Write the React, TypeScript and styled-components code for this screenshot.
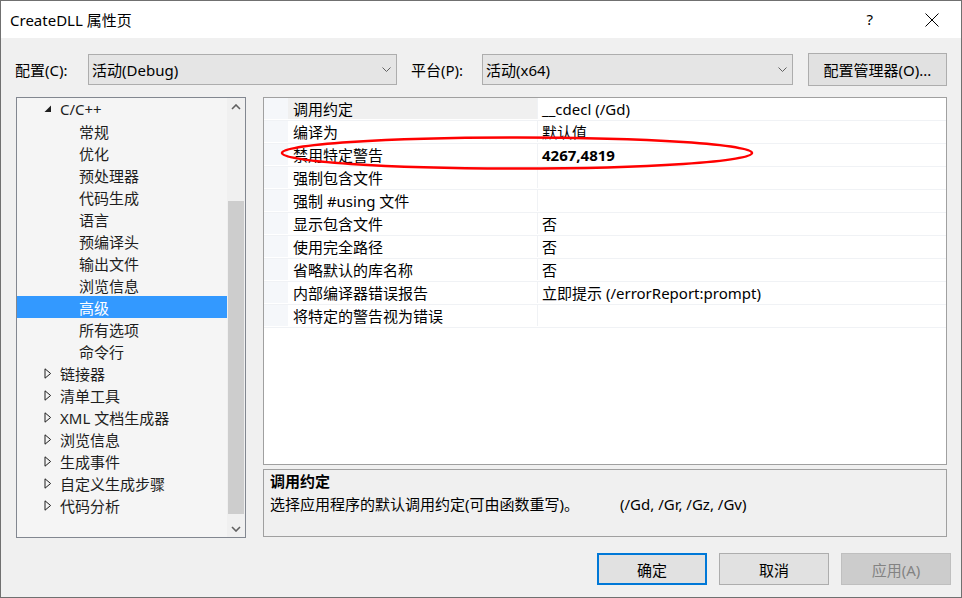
import { FC } from 'react';
import styled, { createGlobalStyle } from 'styled-components';

const GlobalStyle = createGlobalStyle`
  html, body {
    margin: 0;
    padding: 0;
    background: #f0f0f0;
  }
  body {
    font-family: 'Noto Sans', 'Noto Sans CJK SC', sans-serif;
    font-size: 15px;
    color: #000;
  }
  * {
    box-sizing: border-box;
  }
`;

type TreeNode = {
  label: string;
  depth: 1 | 2;
  state?: 'open' | 'closed';
  selected?: boolean;
};

const treeNodes: TreeNode[] = [
  { label: 'C/C++', depth: 1, state: 'open' },
  { label: '常规', depth: 2 },
  { label: '优化', depth: 2 },
  { label: '预处理器', depth: 2 },
  { label: '代码生成', depth: 2 },
  { label: '语言', depth: 2 },
  { label: '预编译头', depth: 2 },
  { label: '输出文件', depth: 2 },
  { label: '浏览信息', depth: 2 },
  { label: '高级', depth: 2, selected: true },
  { label: '所有选项', depth: 2 },
  { label: '命令行', depth: 2 },
  { label: '链接器', depth: 1, state: 'closed' },
  { label: '清单工具', depth: 1, state: 'closed' },
  { label: 'XML 文档生成器', depth: 1, state: 'closed' },
  { label: '浏览信息', depth: 1, state: 'closed' },
  { label: '生成事件', depth: 1, state: 'closed' },
  { label: '自定义生成步骤', depth: 1, state: 'closed' },
  { label: '代码分析', depth: 1, state: 'closed' },
];

type Prop = { name: string; value?: string; bold?: boolean; current?: boolean };

const props: Prop[] = [
  { name: '调用约定', value: '__cdecl (/Gd)', current: true },
  { name: '编译为', value: '默认值' },
  { name: '禁用特定警告', value: '4267,4819', bold: true },
  { name: '强制包含文件' },
  { name: '强制 #using 文件' },
  { name: '显示包含文件', value: '否' },
  { name: '使用完全路径', value: '否' },
  { name: '省略默认的库名称', value: '否' },
  { name: '内部编译器错误报告', value: '立即提示 (/errorReport:prompt)' },
  { name: '将特定的警告视为错误' },
];

const ComboArrow: FC = () => (
  <svg width="9" height="5" viewBox="0 0 9 5">
    <path d="M0.5 0.5 L4.5 4.5 L8.5 0.5" fill="none" stroke="#606060" strokeWidth="1" />
  </svg>
);

const TreeArrow: FC<{ state: 'open' | 'closed' }> = ({ state }) =>
  state === 'open' ? (
    <svg width="8" height="8" viewBox="0 0 8 8">
      <path d="M7 0.5 L7 7 L0.5 7 Z" fill="#1e1e1e" />
    </svg>
  ) : (
    <svg width="8" height="11" viewBox="0 0 8 11">
      <path d="M1 0.8 L6.6 5.5 L1 10.2 Z" fill="none" stroke="#1e1e1e" strokeWidth="1" />
    </svg>
  );

const ScrollChevron: FC<{ up?: boolean }> = ({ up }) => (
  <svg width="10" height="6" viewBox="0 0 10 6">
    <path
      d={up ? 'M1 5 L5 1 L9 5' : 'M1 1 L5 5 L9 1'}
      fill="none"
      stroke="#606060"
      strokeWidth="1.6"
    />
  </svg>
);

const App: FC = () => {
  return (
    <Window>
      <GlobalStyle />
      <TitleBar>
        <Title>CreateDLL 属性页</Title>
        <TitleButtons>
          <HelpMark>?</HelpMark>
          <svg width="14" height="14" viewBox="0 0 14 14">
            <path d="M0.5 0.5 L13.5 13.5 M13.5 0.5 L0.5 13.5" stroke="#000" strokeWidth="1" />
          </svg>
        </TitleButtons>
      </TitleBar>

      <ConfigRow>
        <FieldLabel>配置(C):</FieldLabel>
        <Combo>
          <span>活动(Debug)</span>
          <ComboArrow />
        </Combo>
        <FieldLabel $gap>平台(P):</FieldLabel>
        <Combo $width={311}>
          <span>活动(x64)</span>
          <ComboArrow />
        </Combo>
        <ManagerButton>配置管理器(O)...</ManagerButton>
      </ConfigRow>

      <Main>
        <Tree>
          <TreeList>
            {treeNodes.map((n, i) => (
              <TreeRow key={i} $depth={n.depth} $selected={n.selected}>
                {n.state && (
                  <Expander>
                    <TreeArrow state={n.state} />
                  </Expander>
                )}
                {n.label}
              </TreeRow>
            ))}
          </TreeList>
          <ScrollBar>
            <ScrollButton>
              <ScrollChevron up />
            </ScrollButton>
            <ScrollTrack>
              <ScrollThumb />
            </ScrollTrack>
            <ScrollButton>
              <ScrollChevron />
            </ScrollButton>
          </ScrollBar>
        </Tree>

        <RightColumn>
          <Grid>
            {props.map((p, i) => (
              <GridRow key={i}>
                <Gutter />
                <NameCell $current={p.current}>{p.name}</NameCell>
                <ValueCell $bold={p.bold}>{p.value}</ValueCell>
              </GridRow>
            ))}
            <Marker width="474" height="36" viewBox="0 0 474 36">
              <ellipse cx="237" cy="18" rx="235" ry="15.5" fill="none" stroke="#ff0000" strokeWidth="2.5" />
            </Marker>
          </Grid>
          <Description>
            <DescTitle>调用约定</DescTitle>
            <DescText>
              <DescLead>选择应用程序的默认调用约定(可由函数重写)。</DescLead>
              (/Gd, /Gr, /Gz, /Gv)
            </DescText>
          </Description>
        </RightColumn>
      </Main>

      <Footer>
        <DialogButton $primary>确定</DialogButton>
        <DialogButton>取消</DialogButton>
        <DialogButton disabled>应用(A)</DialogButton>
      </Footer>
    </Window>
  );
};

export default App;

const Window = styled.div`
  width: 962px;
  height: 598px;
  display: flex;
  flex-direction: column;
  background: #f0f0f0;
  border: 1px solid #707070;
  overflow: hidden;
`;

const TitleBar = styled.div`
  height: 37px;
  flex-shrink: 0;
  display: flex;
  align-items: center;
  justify-content: space-between;
  background: #fff;
  padding: 0 22px 0 9px;
`;

const Title = styled.div`
  font-size: 15px;
`;

const TitleButtons = styled.div`
  display: flex;
  align-items: center;
  gap: 52px;
`;

const HelpMark = styled.span`
  font-size: 15px;
  line-height: 1;
`;

const ConfigRow = styled.div`
  display: flex;
  align-items: center;
  height: 33px;
  margin-top: 15px;
  padding-left: 14px;
`;

const FieldLabel = styled.span<{ $gap?: boolean }>`
  margin-left: ${(p) => (p.$gap ? '14px' : '0')};
  width: ${(p) => (p.$gap ? 71 : 73)}px;
  white-space: nowrap;
`;

const Combo = styled.div<{ $width?: number }>`
  width: ${(p) => p.$width ?? 309}px;
  height: 31px;
  display: flex;
  align-items: center;
  justify-content: space-between;
  padding: 0 5px 0 3px;
  background: #e5e5e5;
  border: 1px solid #adadad;
`;

const ManagerButton = styled.div`
  margin-left: 15px;
  width: 139px;
  height: 33px;
  display: flex;
  align-items: center;
  justify-content: center;
  background: #e1e1e1;
  border: 1px solid #adadad;
`;

const Main = styled.div`
  display: flex;
  margin-top: 11px;
  padding-left: 15px;
  gap: 17px;
`;

const Tree = styled.div`
  width: 230px;
  height: 441px;
  display: flex;
  background: #f5f5f5;
  border: 1px solid #828790;
`;

const TreeList = styled.div`
  flex: 1;
  display: flex;
  flex-direction: column;
`;

const TreeRow = styled.div<{ $depth: number; $selected?: boolean }>`
  height: 22px;
  display: flex;
  align-items: center;
  padding-left: ${(p) => (p.$depth === 1 ? 27 : 62)}px;
  white-space: nowrap;
  background: ${(p) => (p.$selected ? '#3399ff' : 'transparent')};
  color: ${(p) => (p.$selected ? '#fff' : '#1e1e1e')};
`;

const Expander = styled.span`
  width: 16px;
  display: flex;
  align-items: center;
`;

const ScrollBar = styled.div`
  width: 18px;
  display: flex;
  flex-direction: column;
  background: #f0f0f0;
`;

const ScrollButton = styled.div`
  height: 17px;
  display: flex;
  align-items: center;
  justify-content: center;
`;

const ScrollTrack = styled.div`
  flex: 1;
  padding: 86px 1px 0;
`;

const ScrollThumb = styled.div`
  height: 313px;
  background: #cdcdcd;
`;

const RightColumn = styled.div`
  width: 684px;
  display: flex;
  flex-direction: column;
  gap: 4px;
`;

const Grid = styled.div`
  position: relative;
  height: 368px;
  background: #fff;
  border: 1px solid #a0a0a0;
`;

const GridRow = styled.div`
  display: grid;
  grid-template-columns: 24px 249px 1fr;
  height: 23px;
  padding-bottom: 1px;
  border-bottom: 1px solid #f0f2f5;
`;

const Gutter = styled.div`
  background: #f5f7fa;
`;

const NameCell = styled.div<{ $current?: boolean }>`
  display: flex;
  align-items: center;
  padding-left: 5px;
  white-space: nowrap;
  background: ${(p) => (p.$current ? '#f0f0f0' : '#fff')};
`;

const ValueCell = styled.div<{ $bold?: boolean }>`
  display: flex;
  align-items: center;
  padding-left: 4px;
  white-space: nowrap;
  border-left: 1px solid #f0f2f5;
  font-weight: ${(p) => (p.$bold ? 700 : 400)};
`;

const Marker = styled.svg`
  position: absolute;
  left: 16px;
  top: 37px;
  pointer-events: none;
`;

const Description = styled.div`
  height: 68px;
  padding: 0 6px;
  background: #f0f0f0;
  border: 1px solid #a0a0a0;
`;

const DescTitle = styled.div`
  height: 22px;
  line-height: 22px;
  font-weight: 700;
`;

const DescText = styled.div`
  height: 24px;
  line-height: 24px;
  white-space: nowrap;
`;

const DescLead = styled.span`
  display: inline-block;
  width: 350px;
`;

const Footer = styled.div`
  display: flex;
  justify-content: flex-end;
  gap: 12px;
  margin-top: 15px;
  padding-right: 10px;
`;

const DialogButton = styled.button<{ $primary?: boolean }>`
  width: 110px;
  height: 32px;
  font: inherit;
  color: #000;
  background: #e1e1e1;
  border: ${(p) => (p.$primary ? '2px solid #0078d7' : '1px solid #adadad')};

  &:disabled {
    color: #838383;
    background: #cccccc;
    border-color: #bfbfbf;
  }
`;
